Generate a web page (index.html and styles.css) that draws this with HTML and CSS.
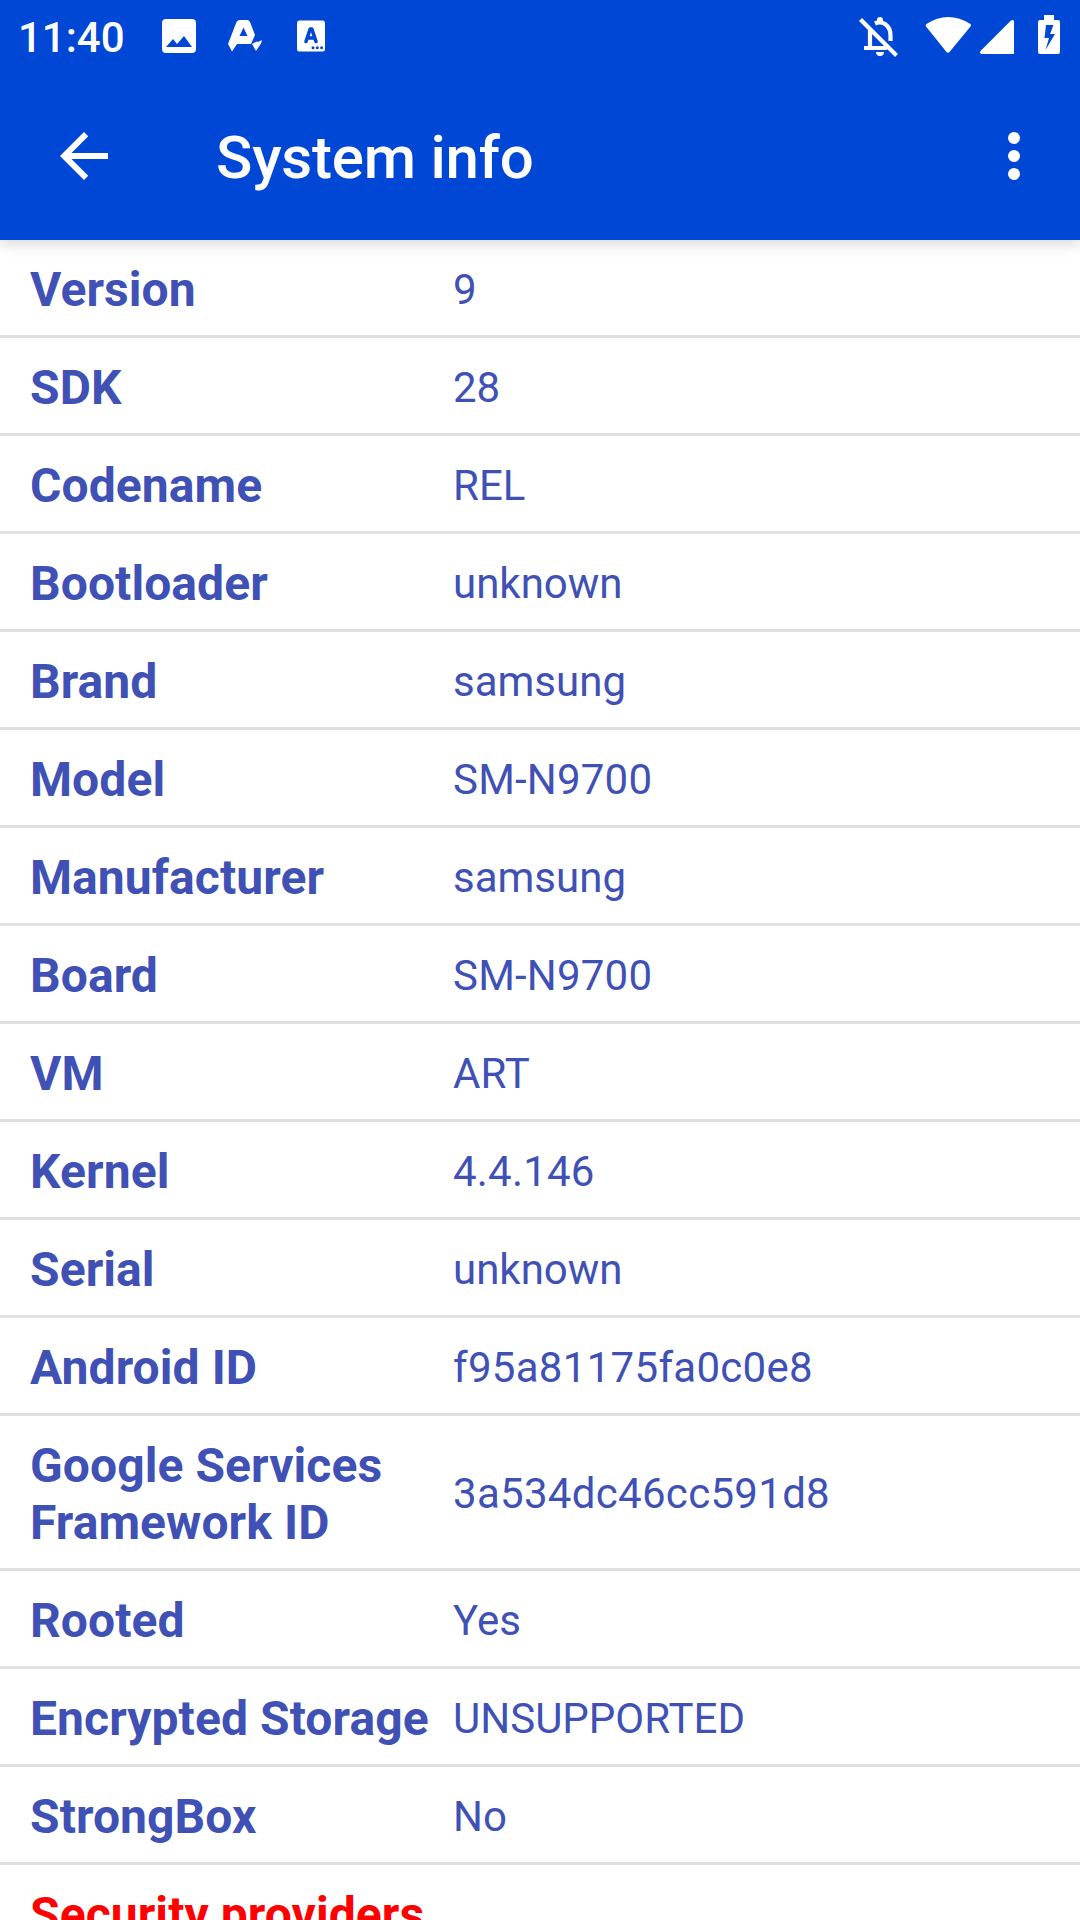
FILE: index.html
```html
<!DOCTYPE html>
<html lang="en">
<head>
<meta charset="utf-8">
<title>System info</title>
<link rel="stylesheet" href="styles.css">
</head>
<body>
<header class="header">
  <div class="status">
    <span class="clock">11:40</span>
    <svg class="ico" width="66" height="72" viewBox="146 0 66 72"><path fill-rule="evenodd" d="M166 19h26q4 0 4 4v26q0 4-4 4H166q-4 0-4-4V23q0-4 4-4zM166 47h26l-8-11-7 8-4-5z"/></svg>
    <svg class="ico" width="66" height="72" viewBox="212 0 66 72"><path fill-rule="evenodd" d="M240 20h7q2 0 3 2l5 13-4 9H237l-5 7.500-4-7.500 8.500-22q1-2 3.500-2zM243.500 27.500l-4 8.500h8zM252 44l4.500-2.500 1.500.5 4-2-1 3.500-5 7.500z"/></svg>
    <svg class="ico" width="66" height="72" viewBox="278 0 66 72"><rect x="297" y="20.500" width="28" height="31" rx="2.500"/><path class="cut" d="M306 41.500l4.200-12.500h1.600l4.200 12.500M307.500 38h7"/><g class="hole"><circle cx="313" cy="47.700" r="1.500"/><circle cx="317.300" cy="47.700" r="1.500"/><circle cx="321.600" cy="47.700" r="1.500"/></g></svg>
    <span class="spacer"></span>
    <svg class="ico" width="66" height="72" viewBox="850 0 66 72"><path class="line" d="M860.500 19.500L896.500 55.500M870 30V48M864 48H887M875 23.500Q880 21 885 24Q890.500 28 890.500 35V41"/><path d="M877 23v-3q0-3 3-3t3 3v3zM876 52h8q0 4-4 4t-4-4z"/></svg>
    <svg class="ico" width="60" height="72" viewBox="916 0 60 72"><path d="M926.500 24Q948 10 970.500 24q1 1 0 2.500L949.500 52q-1.500 1.500-3 0L926 26.500q-1-1.500.5-2.500z"/></svg>
    <svg class="ico" width="48" height="72" viewBox="976 0 48 72"><path d="M981.500 54q-2.500-1-1-3L1011 20.500q3-1.500 3 1V54z"/></svg>
    <svg class="ico" width="56" height="72" viewBox="1024 0 56 72"><path fill-rule="evenodd" d="M1044 15h10v5h4q2 0 2 2V52q0 2-2 2H1040q-2 0-2-2V22q0-2 2-2h4zM1046 25l-1.500 13h4.500l-3.500 12 9.500-16h-5l3.500-9z"/></svg>
  </div>
  <div class="toolbar">
    <svg class="back" width="72" height="72" viewBox="0 0 24 24"><path d="M20 11H7.830l5.590-5.590L12 4l-8 8 8 8 1.410-1.410L7.830 13H20z"/></svg>
    <h1 class="title">System info</h1>
    <svg class="more" width="72" height="72" viewBox="0 0 24 24"><circle cx="12" cy="6" r="2"/><circle cx="12" cy="12" r="2"/><circle cx="12" cy="18" r="2"/></svg>
  </div>
</header>
<main class="list">
  <div class="row"><div class="label">Version</div><div class="value">9</div></div>
  <div class="row"><div class="label">SDK</div><div class="value">28</div></div>
  <div class="row"><div class="label">Codename</div><div class="value">REL</div></div>
  <div class="row"><div class="label">Bootloader</div><div class="value">unknown</div></div>
  <div class="row"><div class="label">Brand</div><div class="value">samsung</div></div>
  <div class="row"><div class="label">Model</div><div class="value code">SM-N9700</div></div>
  <div class="row"><div class="label">Manufacturer</div><div class="value">samsung</div></div>
  <div class="row"><div class="label">Board</div><div class="value code">SM-N9700</div></div>
  <div class="row"><div class="label">VM</div><div class="value">ART</div></div>
  <div class="row"><div class="label">Kernel</div><div class="value code">4.4.146</div></div>
  <div class="row"><div class="label">Serial</div><div class="value">unknown</div></div>
  <div class="row"><div class="label">Android ID</div><div class="value hex">f95a81175fa0c0e8</div></div>
  <div class="row"><div class="label">Google Services Framework ID</div><div class="value hex">3a534dc46cc591d8</div></div>
  <div class="row"><div class="label">Rooted</div><div class="value">Yes</div></div>
  <div class="row"><div class="label">Encrypted Storage</div><div class="value">UNSUPPORTED</div></div>
  <div class="row"><div class="label">StrongBox</div><div class="value">No</div></div>
  <div class="row section"><div class="label">Security providers</div></div>
</main>
</body>
</html>
```
FILE: styles.css
```css
body {
  margin: 0;
  height: 1920px;
  overflow: hidden;
  display: flex;
  flex-direction: column;
  background: #fff;
  font-family: Roboto, sans-serif;
}
.header {
  flex: none;
  height: 240px;
  background: #0047d5;
  color: #fff;
  box-shadow: 0 4px 14px rgba(0, 0, 0, 0.16);
  z-index: 1;
}
.header svg { fill: #fff; flex: none; }
.status { display: flex; height: 72px; }
.clock {
  width: 128px;
  padding-left: 18px;
  font-size: 42px;
  font-weight: 500;
  line-height: 76px;
}
.spacer { flex: 1; }
.header .cut {
  fill: none;
  stroke: #0047d5;
  stroke-width: 3.6;
  stroke-linecap: round;
  stroke-linejoin: round;
}
.header .hole { fill: #0047d5; }
.header .line { fill: none; stroke: #fff; stroke-width: 4.2; }
.toolbar {
  display: flex;
  align-items: center;
  height: 168px;
  padding: 0 30px 0 48px;
}
.title {
  flex: 1;
  margin: 0 0 0 96px;
  padding-top: 4px;
  font-size: 60px;
  font-weight: 500;
  line-height: 72px;
  letter-spacing: -0.2px;
}
.list { min-height: 0; overflow: hidden; }
.row {
  display: flex;
  align-items: center;
  padding: 21px 30px 17px;
  border-bottom: 3px solid #e0e0e0;
  color: #3f51b5;
}
.label {
  width: 423px;
  box-sizing: border-box;
  padding-right: 20px;
  font-size: 48px;
  font-weight: 700;
  line-height: 57px;
  letter-spacing: 0.08px;
}
.value {
  margin-bottom: 1px;
  font-size: 42px;
  line-height: 49px;
}
.code { letter-spacing: 0.2px; }
.hex { letter-spacing: 0.3px; }
.section { color: #f00; }
.section .label { white-space: nowrap; }
```
